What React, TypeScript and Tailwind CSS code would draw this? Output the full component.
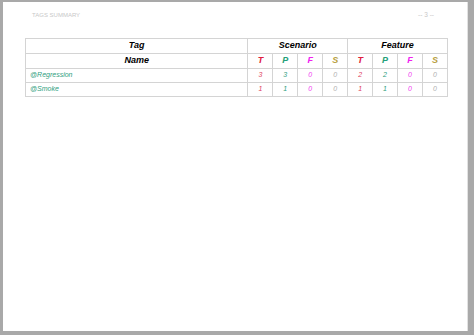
import React from 'react';

const rows = [
  { name: '@Regression', sc: ['3', '3', '0', '0'], ft: ['2', '2', '0', '0'] },
  { name: '@Smoke', sc: ['1', '1', '0', '0'], ft: ['1', '1', '0', '0'] },
];

const headColors = ['text-[#e0203c]', 'text-[#23a078]', 'text-[#f020f0]', 'text-[#b8a040]'];
const cellColors = ['text-[#e04060]', 'text-[#30a080]', 'text-[#f040f0]', 'text-[#b0b0b0]'];

const cell = 'border border-[#d4d4d4]';

export default function App() {
  return (
    <div className="w-[474px] h-[335px] bg-[#a9a9a9] pl-[3px] pr-[6px] pt-[2px] pb-[4px] font-['Liberation_Sans',Arial,sans-serif]">
      <div className="w-full h-full bg-white border-r border-[#e2e2e2] pt-[9px] px-[22px]">
        <div className="flex justify-between items-center h-[8px] text-[6px] text-[#c8c8c8] px-[7px]">
          <span>TAGS SUMMARY</span>
          <span className="mr-[4px] text-[6.5px]">-- 3 --</span>
        </div>
        <table className="mt-[19px] w-[423px] border-collapse italic text-center">
          <thead>
            <tr className="h-[15px] text-[9px] font-bold text-black">
              <th className={`${cell} w-[223px]`}>Tag</th>
              <th className={cell} colSpan={4}>Scenario</th>
              <th className={cell} colSpan={4}>Feature</th>
            </tr>
            <tr className="h-[15px] text-[9px] font-bold text-black">
              <th className={cell}>Name</th>
              {[0, 1].map((g) =>
                ['T', 'P', 'F', 'S'].map((l, i) => (
                  <th key={`${g}${l}`} className={`${cell} w-[25px] ${headColors[i]}`}>
                    {l}
                  </th>
                ))
              )}
            </tr>
          </thead>
          <tbody>
            {rows.map((r) => (
              <tr key={r.name} className="h-[14px] text-[7px]">
                <td className={`${cell} text-left pl-[4px] text-[#30a080]`}>{r.name}</td>
                {[...r.sc, ...r.ft].map((v, i) => (
                  <td key={i} className={`${cell} ${cellColors[i % 4]}`}>
                    {v}
                  </td>
                ))}
              </tr>
            ))}
          </tbody>
        </table>
      </div>
    </div>
  );
}
